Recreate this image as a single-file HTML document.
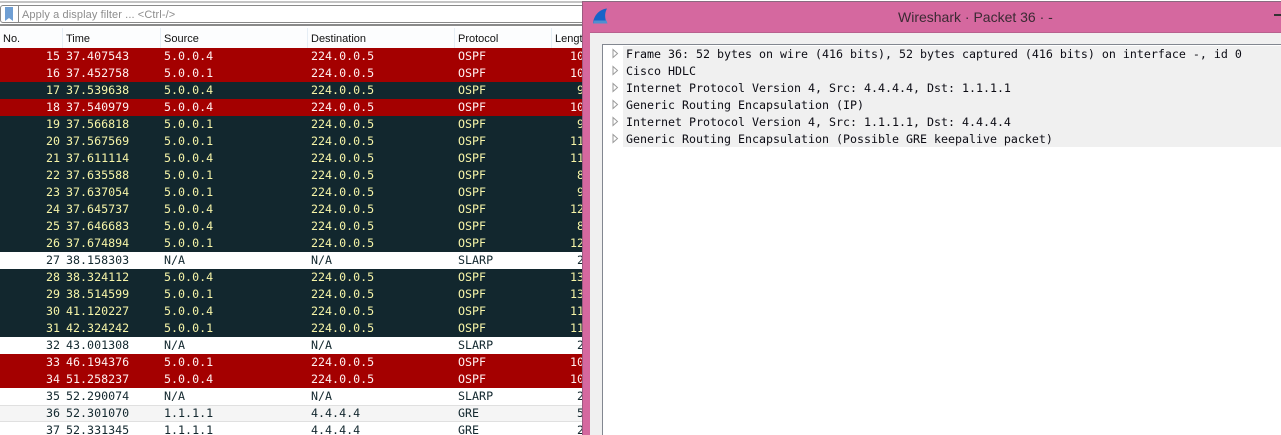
<!DOCTYPE html>
<html><head><meta charset="utf-8"><style>
html,body{margin:0;padding:0;background:#fff}
#p{position:relative;width:1281px;height:435px;overflow:hidden;background:#fff;font-family:"Liberation Sans",sans-serif}
#p div{position:absolute;box-sizing:border-box}
.r{left:0;width:600px;height:17px;font:11.67px/17px "DejaVu Sans Mono","Liberation Mono",monospace;white-space:pre}
.r span{position:absolute;top:0}
.r .n{right:540px}.r .t{left:66px}.r .s{left:164px}.r .d{left:311px}.r .o{left:458px}.r .l{right:9px}
.R{background:#a40000;color:#fff0f0}
.D{background:#12272e;color:#f7f5a8}
.W{background:#fff;color:#12272e}
.G{background:#f5f5f5;color:#12272e;border-top:1px solid #e0e0e0;border-bottom:1px solid #e0e0e0;line-height:15px}
.h{top:28px;height:20px;font-size:11px;line-height:22px;color:#111;background:#fcfdfe;border-right:1px solid #e6eef5;padding-left:3px}
.x{left:626px;height:17px;font:11.64px/17px "DejaVu Sans Mono","Liberation Mono",monospace;color:#0c0c14;white-space:pre}
svg{position:absolute}
</style></head><body><div id="p">
<div style="left:0;top:1px;width:600px;height:2px;background:#c4c4c4"></div>
<div style="left:0;top:5px;width:600px;height:18px;background:#fff;border:1px solid #8a8a8a;border-radius:3px"></div>
<div style="left:18px;top:6px;width:1px;height:16px;background:#8a8a8a"></div>
<svg style="left:5px;top:7px" width="8" height="14" viewBox="0 0 8 14"><path d="M0 0H8V14L4 11L0 14Z" fill="#6f9fd4"/></svg>
<div style="left:22px;top:6px;height:16px;font-size:11px;line-height:18px;color:#8d8d8d;letter-spacing:.1px;white-space:pre">Apply a display filter ... &lt;Ctrl-/&gt;</div>
<div style="left:0;top:24px;width:600px;height:2px;background:#8a8a8a"></div>

<div class="h" style="left:0;width:63px">No.</div>
<div class="h" style="left:63px;width:98px">Time</div>
<div class="h" style="left:161px;width:147px">Source</div>
<div class="h" style="left:308px;width:147px">Destination</div>
<div class="h" style="left:455px;width:97px">Protocol</div>
<div class="h" style="left:552px;width:48px">Length</div>

<div class="r R" style="top:48px"><span class="n">15</span><span class="t">37.407543</span><span class="s">5.0.0.4</span><span class="d">224.0.0.5</span><span class="o">OSPF</span><span class="l">106</span></div>
<div class="r R" style="top:65px"><span class="n">16</span><span class="t">37.452758</span><span class="s">5.0.0.1</span><span class="d">224.0.0.5</span><span class="o">OSPF</span><span class="l">106</span></div>
<div class="r D" style="top:82px"><span class="n">17</span><span class="t">37.539638</span><span class="s">5.0.0.4</span><span class="d">224.0.0.5</span><span class="o">OSPF</span><span class="l">94</span></div>
<div class="r R" style="top:99px"><span class="n">18</span><span class="t">37.540979</span><span class="s">5.0.0.4</span><span class="d">224.0.0.5</span><span class="o">OSPF</span><span class="l">106</span></div>
<div class="r D" style="top:116px"><span class="n">19</span><span class="t">37.566818</span><span class="s">5.0.0.1</span><span class="d">224.0.0.5</span><span class="o">OSPF</span><span class="l">94</span></div>
<div class="r D" style="top:133px"><span class="n">20</span><span class="t">37.567569</span><span class="s">5.0.0.1</span><span class="d">224.0.0.5</span><span class="o">OSPF</span><span class="l">118</span></div>
<div class="r D" style="top:150px"><span class="n">21</span><span class="t">37.611114</span><span class="s">5.0.0.4</span><span class="d">224.0.0.5</span><span class="o">OSPF</span><span class="l">118</span></div>
<div class="r D" style="top:167px"><span class="n">22</span><span class="t">37.635588</span><span class="s">5.0.0.1</span><span class="d">224.0.0.5</span><span class="o">OSPF</span><span class="l">82</span></div>
<div class="r D" style="top:184px"><span class="n">23</span><span class="t">37.637054</span><span class="s">5.0.0.1</span><span class="d">224.0.0.5</span><span class="o">OSPF</span><span class="l">94</span></div>
<div class="r D" style="top:201px"><span class="n">24</span><span class="t">37.645737</span><span class="s">5.0.0.4</span><span class="d">224.0.0.5</span><span class="o">OSPF</span><span class="l">126</span></div>
<div class="r D" style="top:218px"><span class="n">25</span><span class="t">37.646683</span><span class="s">5.0.0.4</span><span class="d">224.0.0.5</span><span class="o">OSPF</span><span class="l">82</span></div>
<div class="r D" style="top:235px"><span class="n">26</span><span class="t">37.674894</span><span class="s">5.0.0.1</span><span class="d">224.0.0.5</span><span class="o">OSPF</span><span class="l">126</span></div>
<div class="r W" style="top:252px"><span class="n">27</span><span class="t">38.158303</span><span class="s">N/A</span><span class="d">N/A</span><span class="o">SLARP</span><span class="l">24</span></div>
<div class="r D" style="top:269px"><span class="n">28</span><span class="t">38.324112</span><span class="s">5.0.0.4</span><span class="d">224.0.0.5</span><span class="o">OSPF</span><span class="l">134</span></div>
<div class="r D" style="top:286px"><span class="n">29</span><span class="t">38.514599</span><span class="s">5.0.0.1</span><span class="d">224.0.0.5</span><span class="o">OSPF</span><span class="l">134</span></div>
<div class="r D" style="top:303px"><span class="n">30</span><span class="t">41.120227</span><span class="s">5.0.0.4</span><span class="d">224.0.0.5</span><span class="o">OSPF</span><span class="l">118</span></div>
<div class="r D" style="top:320px"><span class="n">31</span><span class="t">42.324242</span><span class="s">5.0.0.1</span><span class="d">224.0.0.5</span><span class="o">OSPF</span><span class="l">118</span></div>
<div class="r W" style="top:337px"><span class="n">32</span><span class="t">43.001308</span><span class="s">N/A</span><span class="d">N/A</span><span class="o">SLARP</span><span class="l">24</span></div>
<div class="r R" style="top:354px"><span class="n">33</span><span class="t">46.194376</span><span class="s">5.0.0.1</span><span class="d">224.0.0.5</span><span class="o">OSPF</span><span class="l">106</span></div>
<div class="r R" style="top:371px"><span class="n">34</span><span class="t">51.258237</span><span class="s">5.0.0.4</span><span class="d">224.0.0.5</span><span class="o">OSPF</span><span class="l">106</span></div>
<div class="r W" style="top:388px"><span class="n">35</span><span class="t">52.290074</span><span class="s">N/A</span><span class="d">N/A</span><span class="o">SLARP</span><span class="l">24</span></div>
<div class="r G" style="top:405px"><span class="n">36</span><span class="t">52.301070</span><span class="s">1.1.1.1</span><span class="d">4.4.4.4</span><span class="o">GRE</span><span class="l">52</span></div>
<div class="r W" style="top:422px"><span class="n">37</span><span class="t">52.331345</span><span class="s">1.1.1.1</span><span class="d">4.4.4.4</span><span class="o">GRE</span><span class="l">24</span></div>

<div style="left:582px;top:1px;width:699px;height:434px;background:#d5689f;border-left:1px solid #9c5a80;border-top:1px solid #8a6a80"></div>
<svg style="left:592px;top:8px" width="16" height="16" viewBox="0 0 16 16"><path d="M1 15.500C1.500 9 6 1.500 15 .5C12.500 5 12.500 10 15 15.500Z" fill="#1763c8"/><path d="M1 15.500H15.500L14.500 12.500H1.800Z" fill="#4f8fd0"/></svg>
<div style="left:898px;top:8px;height:20px;font-size:14px;line-height:18px;color:#3a2a33;white-space:pre">Wireshark · Packet 36 · -</div>
<div style="left:1274px;top:14px;width:7px;height:2px;background:#333"></div>
<div style="left:590px;top:32px;width:691px;height:403px;background:#f0f0f0;border-top:1px solid #b8608e"></div>
<div style="left:602px;top:44px;width:679px;height:391px;background:#fff;border-left:1px solid #828790;border-top:1px solid #828790"></div>
<div style="left:623px;top:46px;width:658px;height:101px;background:#f0f0f0"></div>

<svg style="left:612px;top:48px" width="7" height="100" viewBox="0 0 7 100"><g fill="#fff" stroke="#9a9a9a"><path d="M1 1.500L5.500 5.500L1 9.500Z"/><path d="M1 18.500L5.500 22.500L1 26.500Z"/><path d="M1 35.500L5.500 39.500L1 43.500Z"/><path d="M1 52.500L5.500 56.500L1 60.500Z"/><path d="M1 69.500L5.500 73.500L1 77.500Z"/><path d="M1 86.500L5.500 90.500L1 94.500Z"/></g></svg>
<div class="x" style="top:46px">Frame 36: 52 bytes on wire (416 bits), 52 bytes captured (416 bits) on interface -, id 0</div>
<div class="x" style="top:63px">Cisco HDLC</div>
<div class="x" style="top:80px">Internet Protocol Version 4, Src: 4.4.4.4, Dst: 1.1.1.1</div>
<div class="x" style="top:97px">Generic Routing Encapsulation (IP)</div>
<div class="x" style="top:114px">Internet Protocol Version 4, Src: 1.1.1.1, Dst: 4.4.4.4</div>
<div class="x" style="top:131px">Generic Routing Encapsulation (Possible GRE keepalive packet)</div>
</div></body></html>
